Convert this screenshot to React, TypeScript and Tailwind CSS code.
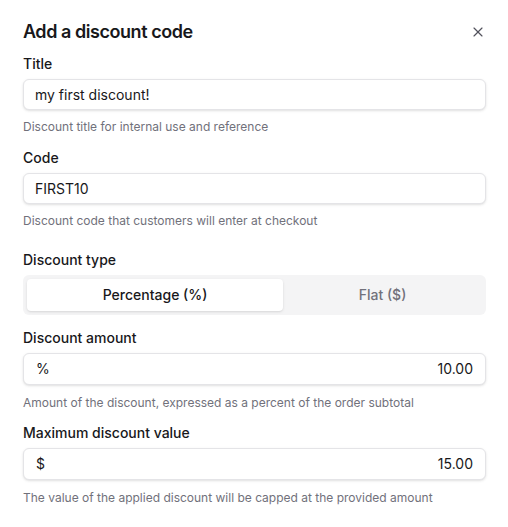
import React, { useState } from 'react';
import { X } from 'lucide-react';

const inputClass =
  'h-[31px] w-full rounded-md border border-zinc-200 bg-white px-[11px] text-sm text-zinc-900 shadow-sm outline-none';

const Field: React.FC<{
  label: string;
  help: string;
  children: React.ReactNode;
  className?: string;
  helpClass?: string;
}> = ({ label, help, children, className, helpClass = 'mt-[9px]' }) => (
  <div className={className}>
    <label className="block text-sm leading-5 font-medium text-zinc-900">{label}</label>
    <div className="mt-[5px]">{children}</div>
    <p className={`${helpClass} text-xs leading-4 text-zinc-500`}>{help}</p>
  </div>
);

export default function App() {
  const [title, setTitle] = useState('my first discount!');
  const [code, setCode] = useState('FIRST10');
  const [type, setType] = useState<'percent' | 'flat'>('percent');

  const tab = (active: boolean) =>
    active
      ? 'flex-auto rounded bg-white text-sm font-medium text-zinc-900 shadow-sm'
      : 'flex-auto rounded text-sm font-medium text-zinc-500';

  return (
    <div className="min-h-screen bg-white pl-[23px] pr-[22px] pt-[18px] font-['Inter',sans-serif] text-zinc-900">
      <div className="flex items-center justify-between">
        <h2 className="text-lg leading-7 font-semibold tracking-tight">Add a discount code</h2>
        <button className="-mt-[1px] text-zinc-600">
          <X size={16} strokeWidth={1.75} />
        </button>
      </div>

      <Field label="Title" help="Discount title for internal use and reference" className="mt-[8px]">
        <input className={inputClass} value={title} onChange={(e) => setTitle(e.target.value)} />
      </Field>

      <Field label="Code" help="Discount code that customers will enter at checkout" className="mt-[13px]">
        <input className={inputClass} value={code} onChange={(e) => setCode(e.target.value)} />
      </Field>

      <div className="mt-[21px]">
        <label className="block text-sm leading-5 font-medium">Discount type</label>
        <div className="mt-[5px] flex h-10 rounded-md bg-zinc-100 p-1">
          <button onClick={() => setType('percent')} className={tab(type === 'percent')}>
            Percentage (%)
          </button>
          <button onClick={() => setType('flat')} className={tab(type === 'flat')}>
            Flat ($)
          </button>
        </div>
      </div>

      <Field
        label="Discount amount"
        help="Amount of the discount, expressed as a percent of the order subtotal"
        className="mt-[13px]"
        helpClass="mt-[10px]"
      >
        <div className="flex h-8 items-center justify-between rounded-md border border-zinc-200 bg-white px-3 text-sm shadow-sm">
          <span>%</span>
          <span>10.00</span>
        </div>
      </Field>

      <Field
        label="Maximum discount value"
        help="The value of the applied discount will be capped at the provided amount"
        className="mt-[12px]"
        helpClass="mt-[10px]"
      >
        <div className="flex h-8 items-center justify-between rounded-md border border-zinc-200 bg-white px-3 text-sm shadow-sm">
          <span>$</span>
          <span>15.00</span>
        </div>
      </Field>
    </div>
  );
}
